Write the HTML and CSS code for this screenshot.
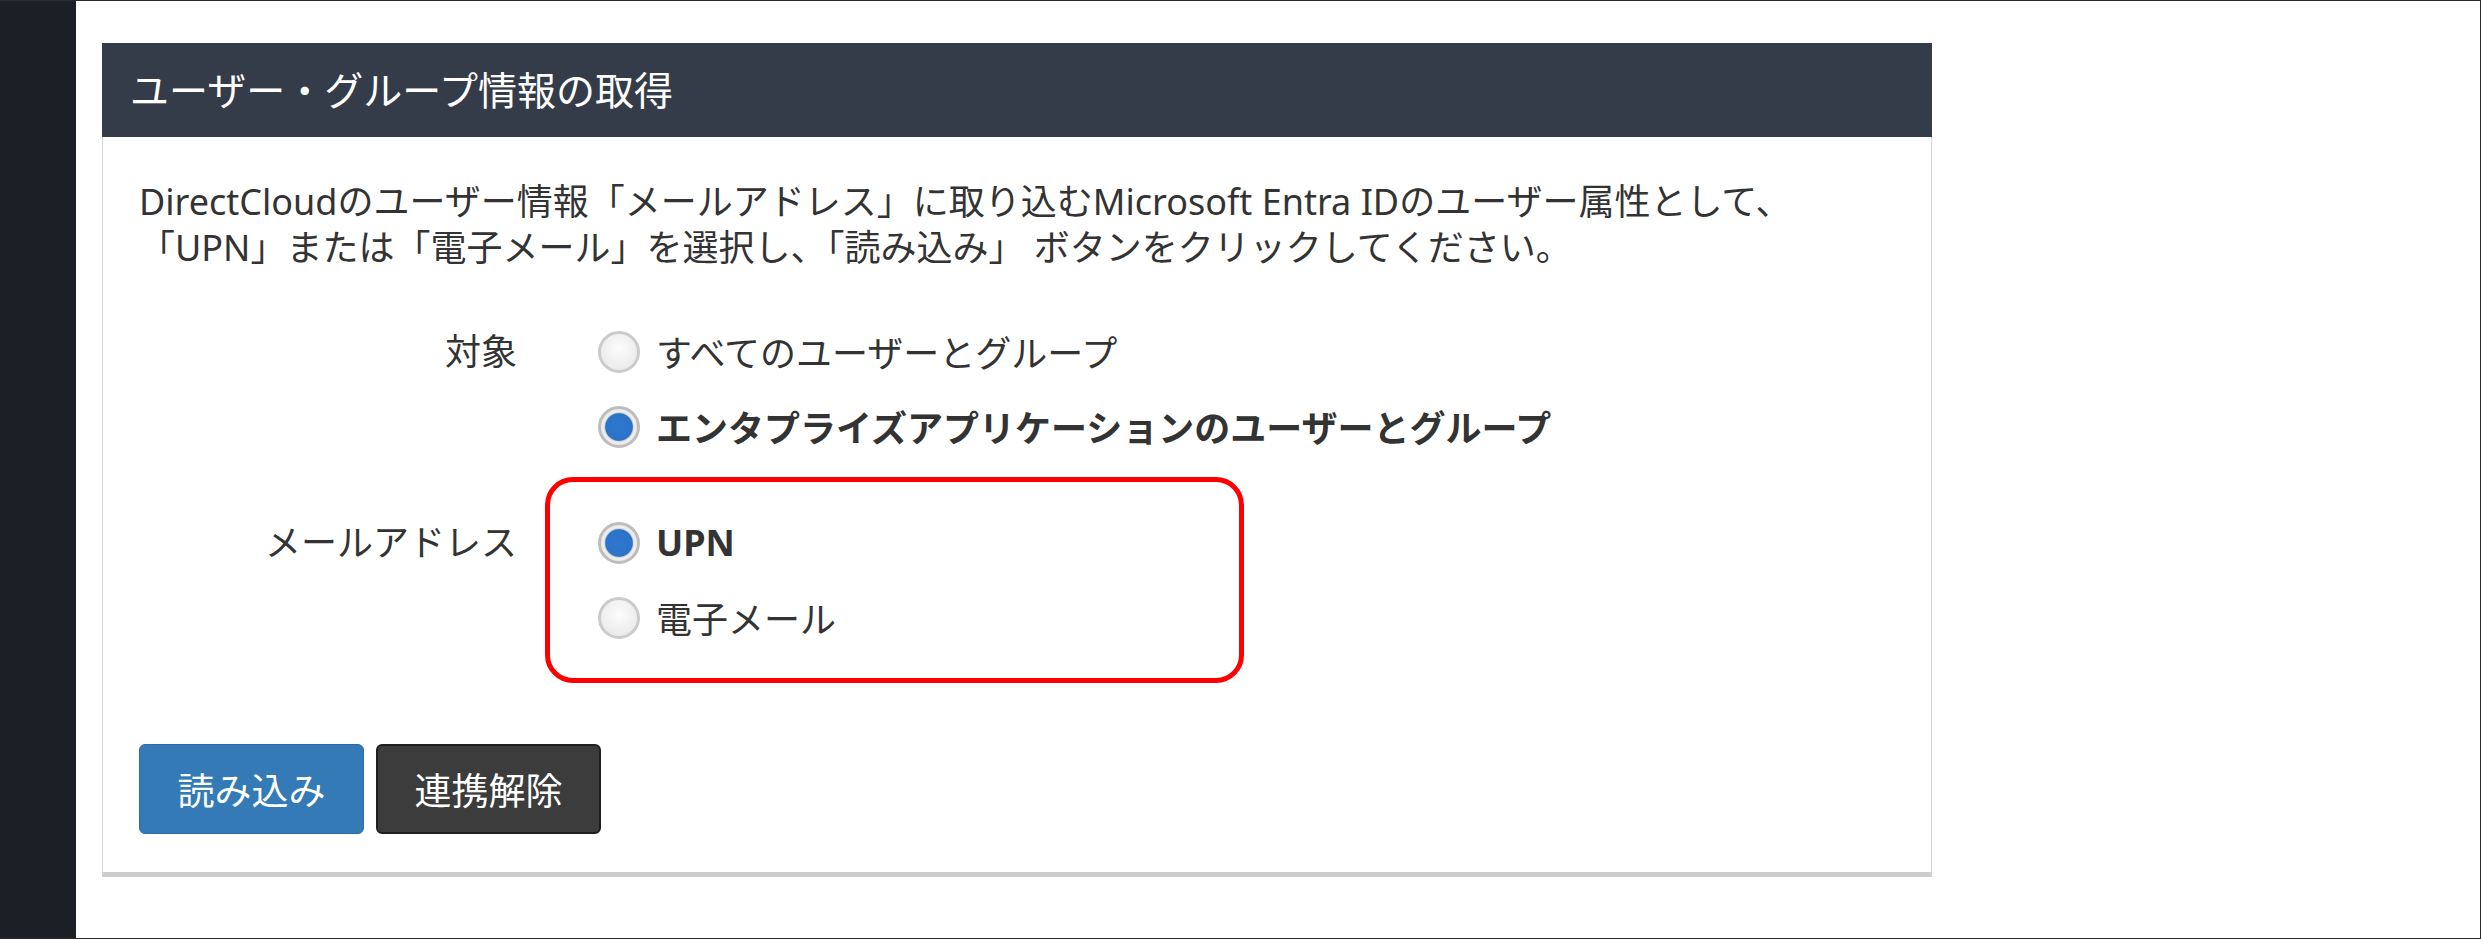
FILE: index.html
```html
<!DOCTYPE html>
<html lang="ja">
<head>
<meta charset="utf-8">
<title>ユーザー・グループ情報の取得</title>
<link rel="stylesheet" href="styles.css">
</head>
<body>
<div class="frame">
  <aside class="sidebar"></aside>
  <main class="content">
    <section class="panel">
      <div class="panel-heading"><h3 class="panel-title">ユーザー・グループ情報の取得</h3></div>
      <div class="panel-body">
        <p class="desc">DirectCloudのユーザー情報「メールアドレス」に取り込むMicrosoft Entra IDのユーザー属性として、<br>「UPN」または「電子メール」を選択し、「読み込み」 ボタンをクリックしてください。</p>
        <div class="form-group">
          <div class="field-label">対象</div>
          <div class="options">
            <label class="option"><input type="radio" name="target"><span>すべてのユーザーとグループ</span></label>
            <label class="option"><input type="radio" name="target" checked><span class="strong">エンタプライズアプリケーションのユーザーとグループ</span></label>
          </div>
        </div>
        <div class="form-group group-mail">
          <div class="field-label">メールアドレス</div>
          <div class="options">
            <label class="option"><input type="radio" name="mail" checked><span class="strong">UPN</span></label>
            <label class="option"><input type="radio" name="mail"><span>電子メール</span></label>
            <div class="highlight"></div>
          </div>
        </div>
        <div class="actions">
          <button class="btn btn-primary" type="button">読み込み</button>
          <button class="btn btn-dark" type="button">連携解除</button>
        </div>
      </div>
    </section>
  </main>
</div>
</body>
</html>
```

FILE: styles.css
```css
html, body {
  margin: 0;
  padding: 0;
}

body {
  width: 2481px;
  height: 939px;
  background: #ffffff;
  font-family: "Noto Sans", "Noto Sans CJK JP", sans-serif;
  color: #333333;
  overflow: hidden;
}

.frame {
  box-sizing: border-box;
  width: 2481px;
  height: 939px;
  border: 1px solid #2a2a2a;
  border-left: none;
  display: flex;
}

.sidebar {
  width: 76px;
  flex: none;
  background: #1c1f26;
}

.content {
  flex: 1;
  padding: 42px 0 0 26px;
}

.panel {
  box-sizing: border-box;
  width: 1830px;
  border: 1px solid #d4d4d4;
  border-top: none;
  border-bottom: 5px solid #cdcdcd;
  background: #ffffff;
}

.panel-heading {
  height: 94px;
  margin: 0 -1px;
  background: #353c49;
  padding-left: 28px;
}

.panel-title {
  margin: 0;
  font-size: 39px;
  line-height: 94px;
  font-weight: normal;
  color: #ffffff;
}

.panel-body {
  padding: 42px 36px 38px 36px;
  font-size: 36px;
}

.desc {
  margin: 0 0 43px 0;
  line-height: 46px;
}

.form-group {
  display: grid;
  grid-template-columns: 378px 1fr;
  column-gap: 81px;
}

.group-mail {
  margin-top: 41px;
}

.field-label {
  text-align: right;
  line-height: 75px;
}

.options {
  position: relative;
  display: flex;
  flex-direction: column;
}

.option {
  display: flex;
  align-items: center;
  height: 75px;
}

.option input {
  -webkit-appearance: none;
  appearance: none;
  box-sizing: border-box;
  flex: none;
  width: 42px;
  height: 42px;
  margin: 0 16px 0 0;
  border-radius: 50%;
  border: 3px solid #cbcbcb;
  background: radial-gradient(circle at 50% 40%, #fcfcfc 0%, #ececec 70%, #e2e2e2 100%);
}

.option input:checked {
  border-color: #bdbdbd;
  background: radial-gradient(circle closest-side, #2e78cf 0, #2b73c8 74%, #d6d6d6 80%, #f1f1f1 88%, #e6e6e6 100%);
}

.strong {
  font-weight: bold;
}

.highlight {
  position: absolute;
  box-sizing: border-box;
  left: -53px;
  top: -28px;
  bottom: -28px;
  width: 699px;
  border: 5px solid #ff0000;
  border-radius: 28px;
  pointer-events: none;
}

.actions {
  display: flex;
  gap: 12px;
  margin-top: 89px;
}

.btn {
  box-sizing: border-box;
  width: 225px;
  height: 90px;
  font-family: inherit;
  font-size: 37px;
  color: #ffffff;
  border-radius: 6px;
  padding: 0;
}

.btn-primary {
  background: #337ab7;
  border: 1px solid #2e6da4;
}

.btn-dark {
  background: #3c3c3c;
  border: 2px solid #1f1f1f;
}
```
